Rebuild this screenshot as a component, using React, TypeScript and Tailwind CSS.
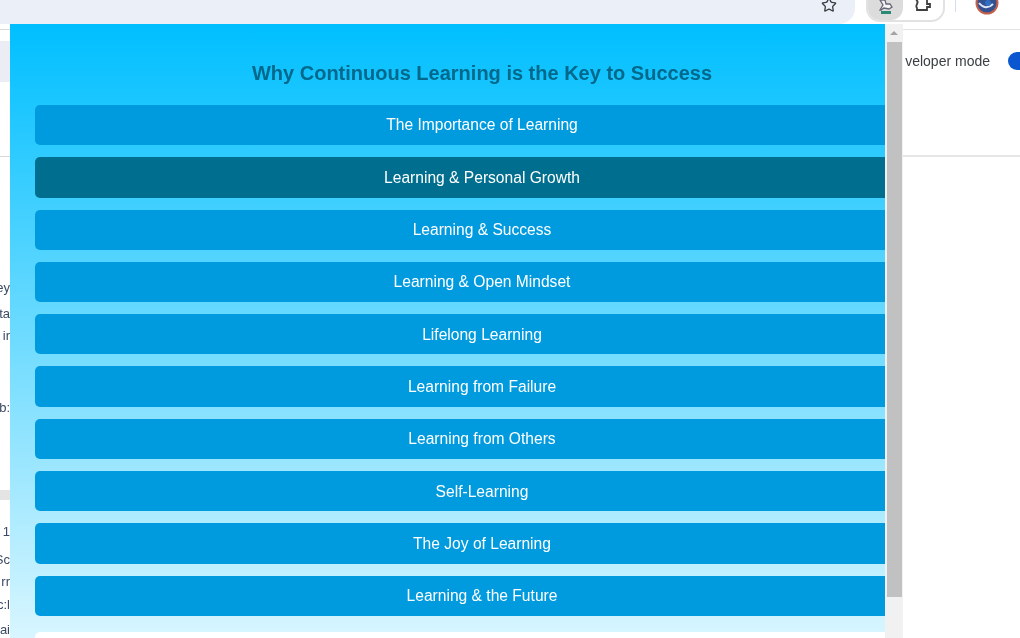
import React from 'react';
import { Star } from 'lucide-react';

const topics = [
  'The Importance of Learning',
  'Learning & Personal Growth',
  'Learning & Success',
  'Learning & Open Mindset',
  'Lifelong Learning',
  'Learning from Failure',
  'Learning from Others',
  'Self-Learning',
  'The Joy of Learning',
  'Learning & the Future',
];

const leftBits = [
  { text: 'ey', cls: 'mt-[124px]' },
  { text: 'ta', cls: 'mt-[12px]' },
  { text: 'ir', cls: 'mt-[8px]' },
  { text: 'b:', cls: 'mt-[58px]' },
];

const leftBitsLower = [
  { text: '1', cls: 'mt-[25px]' },
  { text: 'Sc', cls: 'mt-[14px]' },
  { text: 'rr', cls: 'mt-[8px]' },
  { text: 'c:l', cls: 'mt-[9px]' },
  { text: 'ai', cls: 'mt-[11px]' },
];

function Toolbar() {
  return (
    <div className="flex h-[24px] shrink-0 overflow-hidden bg-white">
      <div className="flex h-full w-[855px] items-start justify-end rounded-br-[16px] bg-[#ebeff8] pr-[18px]">
        <Star size={16} strokeWidth={2} className="-mt-[3px] text-[#3c4043]" />
      </div>
      <div className="flex h-full flex-1 items-start">
        <div className="ml-[11px] flex h-[22px] w-[79px] items-stretch rounded-b-[14px] border-x-2 border-b-2 border-[#e2e2e2]">
          <div className="flex w-[35px] items-start justify-center rounded-b-[12px] bg-[#dcdcdc]">
            <svg width="20" height="20" viewBox="0 0 20 20" fill="none">
              <path d="M4 0h5l1 4h4l2 3-3 2-5-1-3 2H4l3-5z" fill="#f5f5f5" stroke="#667" strokeWidth="1.3" />
              <rect x="5" y="11" width="10" height="3" fill="#2a8a78" />
            </svg>
          </div>
          <div className="flex flex-1 items-start justify-center">
            <svg width="20" height="14" viewBox="0 0 20 14" fill="none">
              <path d="M3 0c2 1 2 2 1 4s-1 3 0 4v2h10V7h3V4h-3V0" stroke="#3f3f3f" strokeWidth="1.8" />
            </svg>
          </div>
        </div>
        <div className="ml-[10px] h-[12px] w-px bg-[#d4deee]" />
        <svg width="26" height="16" viewBox="0 0 26 16" fill="none" className="ml-[18px]">
          <circle cx="13" cy="3" r="10.5" fill="#33508f" stroke="#c4604a" strokeWidth="2" />
          <path d="M5 3c4 5 9 6 14 1" stroke="#dfe6f5" strokeWidth="2" />
          <circle cx="14" cy="3" r="3" fill="#2f6fc4" />
        </svg>
      </div>
    </div>
  );
}

function LeftEdge() {
  return (
    <div className="flex w-[10px] shrink-0 flex-col overflow-hidden whitespace-nowrap bg-white text-[13px] leading-[14px] text-[#3b4a63]">
      <div className="mt-[5px] h-px shrink-0 bg-[#dadada]" />
      <div className="mt-[11px] h-[41px] shrink-0 bg-[#ececf4]" />
      <div className="mt-[74px] h-px shrink-0 bg-[#d8d8d8]" />
      <div className="flex h-[333px] shrink-0 flex-col items-end">
        {leftBits.map((b) => (
          <span key={b.text} className={b.cls}>{b.text}</span>
        ))}
      </div>
      <div className="h-[10px] shrink-0 bg-[#e4e4e4]" />
      <div className="flex flex-col items-end">
        {leftBitsLower.map((b) => (
          <span key={b.text} className={b.cls}>{b.text}</span>
        ))}
      </div>
    </div>
  );
}

function Scrollbar() {
  return (
    <div className="flex w-[18px] shrink-0 flex-col items-center bg-[#f1f1f1]">
      <div className="flex h-[18px] items-center justify-center">
        <div className="h-0 w-0 border-x-[4px] border-b-[4px] border-x-transparent border-b-[#a3a3a3]" />
      </div>
      <div className="h-[555px] w-[15px] bg-[#c1c1c1]" />
    </div>
  );
}

function RightPanel() {
  return (
    <div className="flex min-w-0 flex-1 flex-col overflow-hidden bg-white">
      <div className="mt-[5px] h-px bg-[#e2e2e2]" />
      <div className="flex h-[127px] items-start overflow-hidden border-b-2 border-[#e6e6e6] pt-[22px]">
        <span className="ml-[2px] w-[85px] shrink-0 overflow-hidden whitespace-nowrap text-right text-[14px] leading-[18px] text-[#3c4043] [direction:rtl]">
          Developer mode
        </span>
        <div className="ml-[18px] h-[18px] w-[24px] shrink-0 rounded-full bg-[#0b57d0]" />
      </div>
    </div>
  );
}

export default function App() {
  return (
    <div className="flex h-[638px] w-[1020px] flex-col overflow-hidden bg-white font-['Liberation_Sans',sans-serif] blur-[0.4px]">
      <Toolbar />
      <div className="flex min-h-0 flex-1">
        <LeftEdge />
        <div className="w-[875px] shrink-0 overflow-hidden bg-linear-to-b/srgb from-[#00bfff] to-[#d8f6ff] pl-[25px]">
          {/* content runs wider than the popup, the scrollbar covers its right end */}
          <div className="flex w-[894px] flex-col">
            <h1 className="mt-[36px] mb-[19px] whitespace-nowrap text-center text-[20px] leading-[26px] font-bold text-[#00688b]">
              Why Continuous Learning is the Key to Success
            </h1>
            <div className="flex flex-col gap-[12px]">
              {topics.map((t, i) => (
                <button
                  key={t}
                  className={`h-[40.3px] shrink-0 rounded-[5px] text-center text-[15.6px] text-white ${i === 1 ? 'bg-[#006f8f]' : 'bg-[#009bdf]'}`}
                >
                  {t}
                </button>
              ))}
              <div className="mt-[4px] h-[20px] shrink-0 rounded-[5px] bg-white" />
            </div>
          </div>
        </div>
        <Scrollbar />
        <RightPanel />
      </div>
    </div>
  );
}
